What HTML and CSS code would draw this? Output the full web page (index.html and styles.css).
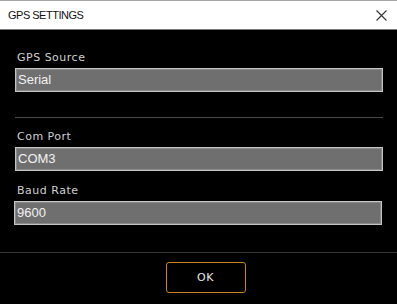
FILE: index.html
```html
<!DOCTYPE html>
<html lang="en">
<head>
    <meta charset="UTF-8">
    <title>GPS Settings</title>
    <link rel="stylesheet" href="styles.css">
</head>
<body>
<div class="dialog">
    <div class="titlebar">
        <span class="title">GPS SETTINGS</span>
        <span class="close">
            <svg width="11" height="11" viewBox="0 0 11 11">
                <path d="M0.5 0.5L10.5 10.5M10.5 0.5L0.5 10.5" stroke="#333" stroke-width="1.1" fill="none"/>
            </svg>
        </span>
    </div>
    <div class="content">
        <div class="field first">
            <label>GPS Source</label>
            <div class="box">Serial</div>
        </div>
        <div class="divider"></div>
        <div class="field">
            <label>Com Port</label>
            <div class="box">COM3</div>
        </div>
        <div class="field">
            <label>Baud Rate</label>
            <div class="box shift">9600</div>
        </div>
    </div>
    <div class="footer">
        <button class="ok">OK</button>
    </div>
</div>
</body>
</html>
```

FILE: styles.css
```css
* {
    margin: 0;
    padding: 0;
    box-sizing: border-box;
}

body {
    background: #000;
    font-family: "Liberation Sans", Arial, sans-serif;
}

.dialog {
    width: 397px;
    height: 304px;
    background: #000;
}

.titlebar {
    height: 30px;
    background: #fff;
    border-top: 1px solid #a6a6a6;
    border-bottom: 1px solid #7a7a7a;
    display: flex;
    align-items: center;
    justify-content: space-between;
    padding: 0 10px 0 8px;
}

.title {
    font-size: 11px;
    letter-spacing: -0.5px;
    color: #111;
}

.close {
    display: flex;
    margin-top: 1px;
}

.content {
    padding: 19px 14px 0 15px;
    height: 222px;
}

.field label {
    display: block;
    font-family: "DejaVu Sans", sans-serif;
    font-size: 11px;
    letter-spacing: 0.5px;
    line-height: 14px;
    color: #d0d0d0;
    padding: 2px 0 0 2px;
    margin-bottom: 3px;
}

.field {
    margin-bottom: 11px;
}

.field.first {
    margin-bottom: 0;
}

.box {
    height: 24px;
    background: #6f6f6f;
    border: 1px solid #c4c4c4;
    box-shadow: inset 0 0 0 1px #8a8a8a;
    color: #f2f2f2;
    font-size: 13px;
    line-height: 22px;
    padding-left: 2px;
}

.box.shift {
    margin-left: -1px;
    margin-right: 1px;
}

.divider {
    height: 1px;
    background: #4a4a4a;
    margin: 25px 0 10px;
}

.footer {
    border-top: 1px solid #333;
    display: flex;
    justify-content: center;
    padding-top: 9px;
}

.ok {
    width: 80px;
    height: 31px;
    margin-left: 14px;
    background: #000;
    border: 1px solid #c7851c;
    border-radius: 3px;
    color: #e8e8e8;
    font-family: "DejaVu Sans", sans-serif;
    font-size: 11px;
    letter-spacing: 0.5px;
}
```
